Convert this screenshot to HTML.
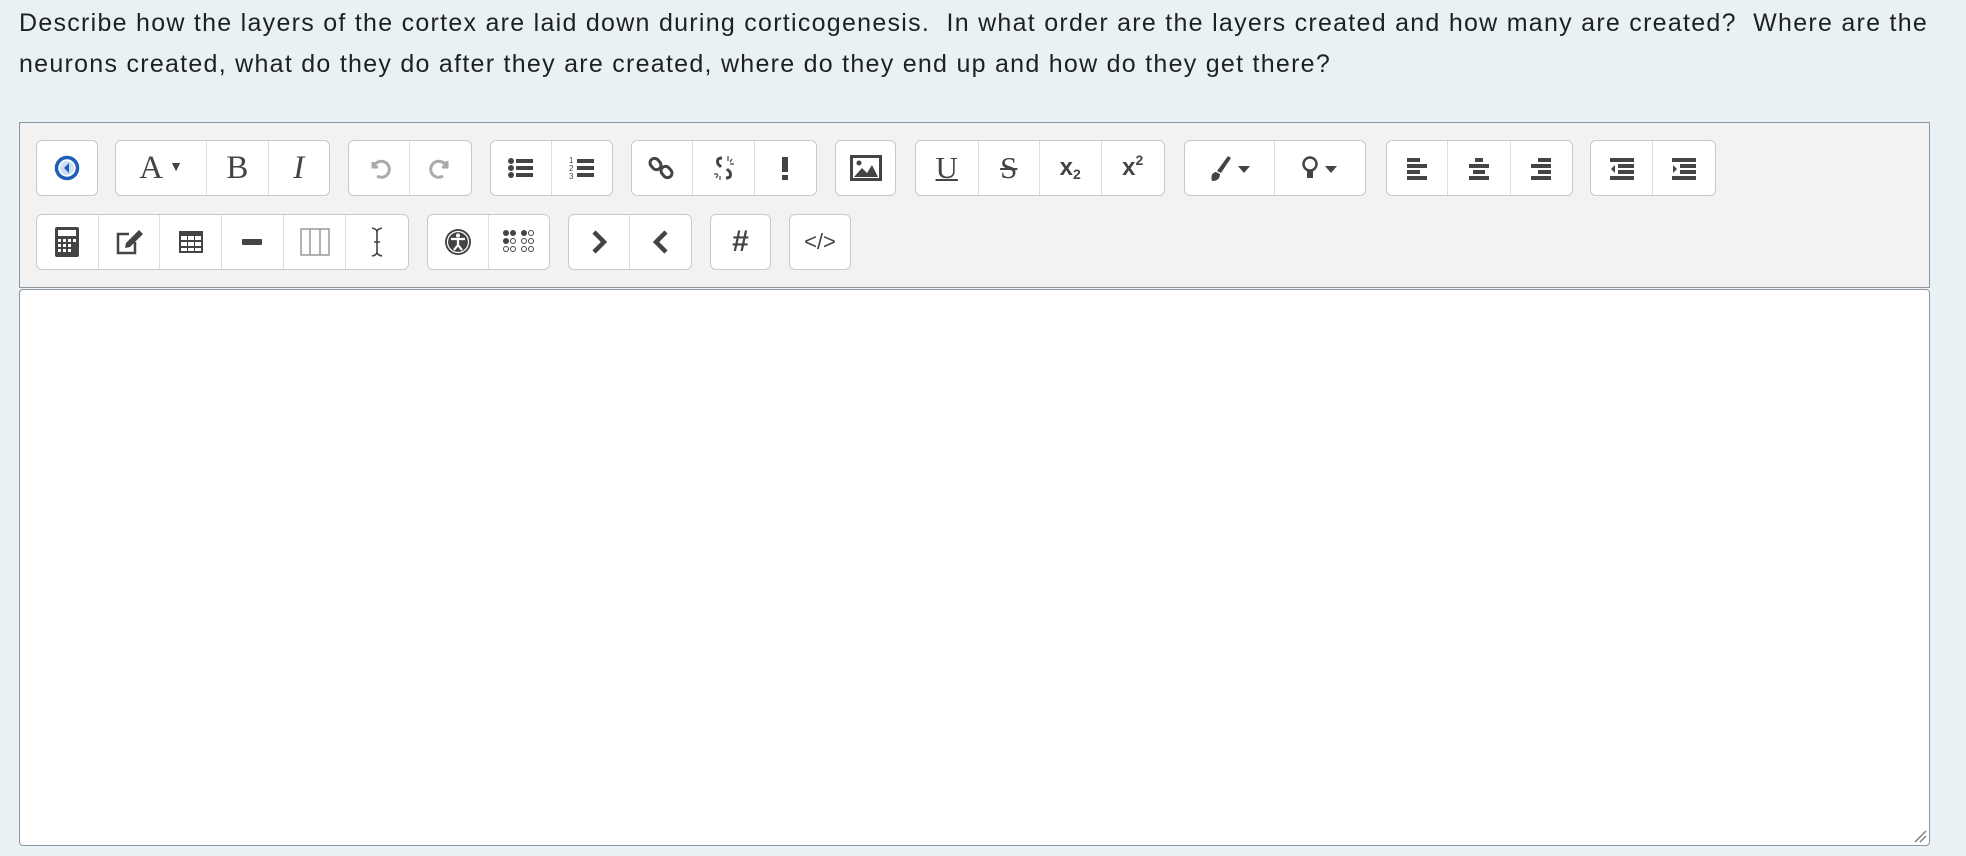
<!DOCTYPE html>
<html><head><meta charset="utf-8"><style>
*{box-sizing:border-box}
body{margin:0;width:1966px;height:856px;background:#e9f1f4;font-family:"Liberation Sans",sans-serif;color:#1d2125;overflow:hidden;position:relative}
.q{position:absolute;left:19px;top:3px;width:1930px;font-size:25px;line-height:41px;letter-spacing:1.27px}
.tb{position:absolute;left:19px;top:122px;width:1911px;height:166px;background:#f2f2f2;border:1px solid #8f959e}
.ta{position:absolute;left:19px;top:289px;width:1911px;height:557px;background:#fff;border:1px solid #8f959e;border-radius:4px}
.g{position:absolute;height:56px;display:flex;background:#fff;border:1px solid #c9c9c9;border-radius:6px;overflow:hidden}
.b{height:100%;border-right:1px solid #ddd;display:flex;align-items:center;justify-content:center;color:#495057}
.b:last-child{border-right:none}
svg{display:block}
</style></head><body>
<div class="q">Describe how the layers of the cortex are laid down during corticogenesis.&nbsp; In what order are the layers created and how many are created?&nbsp; Where are the<br>neurons created, what do they do after they are created, where do they end up and how do they get there?</div>
<div class="tb"></div>
<div class="ta"><svg style="position:absolute;right:2px;bottom:2px" width="14" height="14"><path d="M2 13L13 2M7 13L13 7" stroke="#777" stroke-width="1.3"/></svg></div>

<!-- row 1 -->
<div class="g" style="left:36px;top:140px;width:62px"><div class="b" style="width:62px"><svg width="26" height="26"><circle cx="13" cy="13" r="10.5" fill="none" stroke="#1e5db8" stroke-width="3.5"/><circle cx="13" cy="13" r="7" fill="#cfe0f5"/><path d="M15 8L10 13L15 18Z" fill="#1e5db8"/></svg></div></div>
<div class="g" style="left:115px;top:140px;width:215px"><div class="b" style="width:92px;font-family:'Liberation Serif',serif;font-size:33px;color:#444">A<span style="font-size:14px;margin-left:6px">▼</span></div><div class="b" style="width:62px;font-family:'Liberation Serif',serif;font-size:33px;color:#444">B</div><div class="b" style="width:61px;font-family:'Liberation Serif',serif;font-style:italic;font-size:33px;color:#444">I</div></div>
<div class="g" style="left:348px;top:140px;width:124px"><div class="b" style="width:62px"><svg width="24" height="24"><path d="M6 6V11H11M7 10A8 8 0 1 1 10 20" fill="none" stroke="#aaa" stroke-width="3"/></svg></div><div class="b" style="width:62px"><svg width="24" height="24"><path d="M18 5V11H13M17 10A8 8 0 1 0 14 20" fill="none" stroke="#aaa" stroke-width="3"/></svg></div></div>
<div class="g" style="left:490px;top:140px;width:123px"><div class="b" style="width:62px"><svg width="28" height="24"><g fill="#444"><circle cx="4" cy="5" r="3"/><circle cx="4" cy="12" r="3"/><circle cx="4" cy="19" r="3"/><rect x="9" y="3" width="17" height="4"/><rect x="9" y="10" width="17" height="4"/><rect x="9" y="17" width="17" height="4"/></g></svg></div><div class="b" style="width:61px"><svg width="28" height="28"><g fill="#444"><rect x="9" y="5" width="17" height="4"/><rect x="9" y="12" width="17" height="4"/><rect x="9" y="19" width="17" height="4"/><text x="1" y="9" font-size="8" font-family="Liberation Sans">1</text><text x="1" y="17" font-size="8" font-family="Liberation Sans">2</text><text x="1" y="25" font-size="8" font-family="Liberation Sans">3</text></g></svg></div></div>
<div class="g" style="left:631px;top:140px;width:186px"><div class="b" style="width:62px"><svg width="28" height="28"><g fill="none" stroke="#444" stroke-width="3"><rect x="3" y="4" width="9" height="12" rx="4.5" transform="rotate(-40 7.5 10)"/><rect x="14" y="12" width="9" height="12" rx="4.5" transform="rotate(-40 18.5 18)"/></g></svg></div><div class="b" style="width:62px"><svg width="28" height="28"><g fill="none" stroke="#444" stroke-width="3"><path d="M12 4Q6 4 8 10L11 13"/><path d="M16 24Q22 24 20 18L17 15"/></g><g stroke="#444" stroke-width="1.2"><path d="M18 2V7M22 5L20 8M24 10H20M4 20H8M6 24L8 21M10 26V22"/></g></svg></div><div class="b" style="width:62px"><svg width="10" height="26"><rect x="2" y="2" width="6" height="15" fill="#444"/><rect x="2" y="20" width="6" height="5" fill="#444"/></svg></div></div>
<div class="g" style="left:835px;top:140px;width:61px"><div class="b" style="width:61px"><svg width="32" height="26"><rect x="1.5" y="1.5" width="29" height="23" fill="none" stroke="#444" stroke-width="3"/><path d="M4 22L12 13L17 18L22 10L28 22Z" fill="#444"/><circle cx="9" cy="8" r="2.5" fill="#444"/></svg></div></div>
<div class="g" style="left:915px;top:140px;width:250px"><div class="b" style="width:63px;font-family:'Liberation Serif',serif;font-size:31px;color:#444;text-decoration:underline;text-decoration-thickness:2px">U</div><div class="b" style="width:62px;font-family:'Liberation Serif',serif;font-size:31px;color:#444;text-decoration:line-through;text-decoration-thickness:2px">S</div><div class="b" style="width:62px;font-size:24px;color:#444;font-weight:bold"><span>x</span><span style="font-size:14px;position:relative;top:6px">2</span></div><div class="b" style="width:63px;font-size:24px;color:#444;font-weight:bold"><span>x</span><span style="font-size:14px;position:relative;top:-8px">2</span></div></div>
<div class="g" style="left:1184px;top:140px;width:182px"><div class="b" style="width:91px"><svg width="44" height="30"><path d="M20 3L23 5L13 20L9 18Z" fill="#444"/><path d="M8 19Q2 20 4 28Q12 28 12 21Z" fill="#444"/><path d="M30 13H42L36 20Z" fill="#444"/></svg></div><div class="b" style="width:91px"><svg width="44" height="30"><circle cx="12" cy="11" r="6.5" fill="none" stroke="#444" stroke-width="2.5"/><rect x="9" y="18" width="6" height="7" fill="#444"/><path d="M27 13H39L33 20Z" fill="#444"/></svg></div></div>
<div class="g" style="left:1386px;top:140px;width:187px"><div class="b" style="width:62px"><svg width="26" height="26"><g fill="#444"><rect x="3" y="3" width="13" height="4"/><rect x="3" y="9" width="20" height="4"/><rect x="3" y="15" width="13" height="4"/><rect x="3" y="21" width="20" height="4"/></g></svg></div><div class="b" style="width:63px"><svg width="26" height="26"><g fill="#444"><rect x="9" y="3" width="8" height="4"/><rect x="3" y="9" width="20" height="4"/><rect x="7" y="15" width="12" height="4"/><rect x="3" y="21" width="20" height="4"/></g></svg></div><div class="b" style="width:62px"><svg width="26" height="26"><g fill="#444"><rect x="10" y="3" width="13" height="4"/><rect x="3" y="9" width="20" height="4"/><rect x="10" y="15" width="13" height="4"/><rect x="3" y="21" width="20" height="4"/></g></svg></div></div>
<div class="g" style="left:1590px;top:140px;width:126px"><div class="b" style="width:63px"><svg width="28" height="26"><g fill="#444"><rect x="2" y="3" width="24" height="4"/><rect x="10" y="9" width="16" height="4"/><rect x="10" y="15" width="16" height="4"/><rect x="2" y="21" width="24" height="4"/><path d="M7 10L3 14L7 18Z"/></g></svg></div><div class="b" style="width:63px"><svg width="28" height="26"><g fill="#444"><rect x="2" y="3" width="24" height="4"/><rect x="10" y="9" width="16" height="4"/><rect x="10" y="15" width="16" height="4"/><rect x="2" y="21" width="24" height="4"/><path d="M3 10L7 14L3 18Z"/></g></svg></div></div>

<!-- row 2 -->
<div class="g" style="left:36px;top:214px;width:373px">
<div class="b" style="width:62px"><svg width="26" height="32"><rect x="1" y="1" width="24" height="30" rx="2" fill="#444"/><rect x="4" y="4" width="18" height="6" fill="#fff"/><g fill="#fff"><rect x="4" y="13" width="3" height="3"/><rect x="9" y="13" width="3" height="3"/><rect x="14" y="13" width="3" height="3"/><rect x="19" y="13" width="3" height="3"/><rect x="4" y="18" width="3" height="3"/><rect x="9" y="18" width="3" height="3"/><rect x="14" y="18" width="3" height="3"/><rect x="4" y="23" width="3" height="3"/><rect x="9" y="23" width="3" height="3"/><rect x="14" y="23" width="3" height="3"/></g></svg></div>
<div class="b" style="width:62px"><svg width="32" height="28"><path d="M16 6H5V25H22V14" fill="none" stroke="#444" stroke-width="2.5"/><path d="M26 2L30 6L17 19L12 20L13 15Z" fill="#444"/></svg></div>
<div class="b" style="width:62px"><svg width="26" height="24"><rect x="1" y="1" width="24" height="22" fill="#444"/><g fill="#fff"><rect x="3" y="6" width="6" height="4"/><rect x="10" y="6" width="6" height="4"/><rect x="17" y="6" width="6" height="4"/><rect x="3" y="12" width="6" height="4"/><rect x="10" y="12" width="6" height="4"/><rect x="17" y="12" width="6" height="4"/><rect x="3" y="18" width="6" height="3"/><rect x="10" y="18" width="6" height="3"/><rect x="17" y="18" width="6" height="3"/></g></svg></div>
<div class="b" style="width:62px"><svg width="24" height="8"><rect x="2" y="1" width="20" height="6" rx="1" fill="#444"/></svg></div>
<div class="b" style="width:63px"><svg width="30" height="30"><rect x="1" y="2" width="28" height="26" fill="none" stroke="#999" stroke-width="1.5"/><path d="M10 2V28M20 2V28" stroke="#999" stroke-width="1.5"/></svg></div>
<div class="b" style="width:62px"><svg width="16" height="32"><path d="M3 2Q8 3 8 6V26Q8 29 3 30M13 2Q8 3 8 6M8 26Q8 29 13 30M5 16H11" fill="none" stroke="#444" stroke-width="1.6"/></svg></div>
</div>
<div class="g" style="left:427px;top:214px;width:123px"><div class="b" style="width:62px"><svg width="30" height="30"><circle cx="15" cy="15" r="13" fill="#444"/><circle cx="15" cy="15" r="10.5" fill="none" stroke="#fff" stroke-width="1.2"/><circle cx="15" cy="8.5" r="2" fill="#fff"/><path d="M8 12H22M15 12V18L11 23M15 18L19 23" stroke="#fff" stroke-width="2.2" fill="none"/></svg></div><div class="b" style="width:61px"><svg width="34" height="26"><g fill="#444"><circle cx="4" cy="4" r="3"/><circle cx="11" cy="4" r="3"/><circle cx="4" cy="12" r="3"/><circle cx="22" cy="4" r="3"/></g><g fill="none" stroke="#444" stroke-width="1"><circle cx="11" cy="12" r="2.5"/><circle cx="4" cy="20" r="2.5"/><circle cx="11" cy="20" r="2.5"/><circle cx="29" cy="4" r="2.5"/><circle cx="22" cy="12" r="2.5"/><circle cx="29" cy="12" r="2.5"/><circle cx="22" cy="20" r="2.5"/><circle cx="29" cy="20" r="2.5"/></g></svg></div></div>
<div class="g" style="left:568px;top:214px;width:124px"><div class="b" style="width:62px"><svg width="18" height="26"><path d="M4 3L14 13L4 23" fill="none" stroke="#444" stroke-width="4.5"/></svg></div><div class="b" style="width:62px"><svg width="18" height="26"><path d="M14 3L4 13L14 23" fill="none" stroke="#444" stroke-width="4.5"/></svg></div></div>
<div class="g" style="left:710px;top:214px;width:61px"><div class="b" style="width:61px;font-size:30px;font-weight:bold;color:#444">#</div></div>
<div class="g" style="left:789px;top:214px;width:62px"><div class="b" style="width:62px;font-size:22px;color:#444">&lt;/&gt;</div></div>
</body></html>
